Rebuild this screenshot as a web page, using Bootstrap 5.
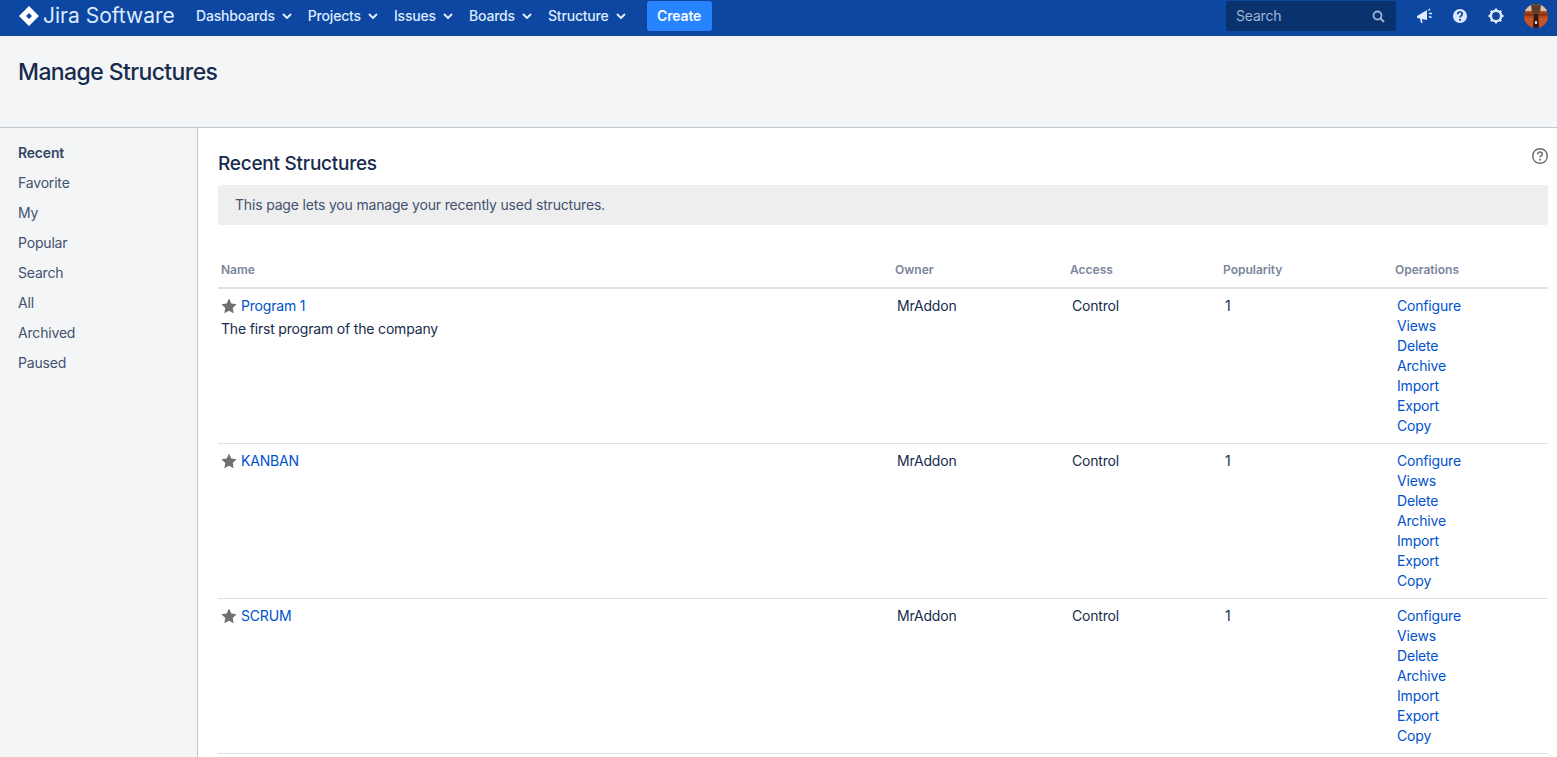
<!DOCTYPE html>
<html lang="en">
<head>
  <meta charset="UTF-8" />
  <title>Manage Structures</title>
  <link href="https://cdn.jsdelivr.net/npm/bootstrap@5.3.3/dist/css/bootstrap.min.css" rel="stylesheet" />
  <style>
    html, body { height: 757px; overflow: hidden; }
    body { font-family: Inter, "Liberation Sans", sans-serif; font-size: 14px; line-height: 20px; letter-spacing: -.18px; color: #172b4d; background: #fff; }
    a { color: #0052cc; text-decoration: none; }
    .topbar { height: 36px; background: #0d47a1; padding: 0 9px 4px 19px; color: #deebff; }
    .logo-name { font-size: 21px; font-weight: 400; color: #deebff; width: 133px; margin-left: 4px; letter-spacing: 0; white-space: nowrap; }
    .topmenu { margin-left: 20px; gap: 16px; }
    .topmenu a { color: #deebff; font-weight: 500; display: flex; align-items: center; gap: 7px; }
    .create-btn { background: #2684ff; color: #f4f8ff; font-weight: 600; border: 0; border-radius: 3px; height: 30px; width: 65px; padding: 0; margin-left: 21px; font-size: 14px; letter-spacing: -.18px; }
    .top-search { width: 170px; height: 30px; background: #09326f; border-radius: 3px; color: #9fb4d6; padding: 0 11px 0 10px; margin-right: 19px; }
    .top-icons { gap: 18px; }
    .avatar { width: 24px; height: 24px; margin-left: 1px; display: block; }
    .page-head { height: 92px; background: #f4f5f7; border-bottom: 1px solid #c1c7d0; padding: 20px 18px 0; }
    .page-head h1 { font-size: 23px; line-height: 32px; font-weight: 500; color: #172b4d; margin: 0; letter-spacing: -.6px; }
    .main-wrap { height: 629px; }
    .side-col { width: 198px; flex: none; background: #f4f5f7; border-right: 1px solid #c1c7d0; padding-top: 10px; }
    .side-col a { display: block; height: 30px; line-height: 30px; padding-left: 18px; color: #42526e; }
    .side-col a.on { font-weight: 600; color: #344563; }
    .content-col { padding: 0 9px 0 20px; min-width: 0; }
    .content-col h2 { font-size: 19px; line-height: 28px; font-weight: 500; margin: 22px 0 7px; letter-spacing: -.25px; }
    .note-box { background: #eeeeee; border-radius: 3px; height: 40px; line-height: 40px; padding-left: 17px; color: #42526e; margin-bottom: 30px; }
    .help-link { position: absolute; top: 19px; right: 8px; line-height: 0; }
    .struct-table { table-layout: fixed; width: 100%; margin: 0; }
    .struct-table th { font-size: 12px; font-weight: 600; letter-spacing: 0; color: #7a869a; padding: 5px 2px 7px 2px; line-height: 20px; border-bottom: 2px solid #dfe1e6; }
    .struct-table td { padding: 7px 2px 7px 4px; border-bottom: 1px solid #dfe1e6; color: #172b4d; vertical-align: top; height: 155px; }
    .struct-table th:first-child, .struct-table td:first-child { padding-left: 3px; }
    .descr { margin-top: 3px; }
    .star-ic { margin-right: 4px; vertical-align: -3px; }
  </style>
</head>
<body>
  <nav class="topbar d-flex align-items-center">
    <svg width="20" height="20" viewBox="0 0 20 20"><defs><linearGradient id="logoFade" x1="0.3" y1="0.3" x2="1" y2="1"><stop offset="0.55" stop-color="#ffffff"/><stop offset="1" stop-color="#a9c6f0"/></linearGradient></defs><path fill-rule="evenodd" d="M10 0 20 10 10 20 0 10ZM10 7 7 10 10 13 13 10Z" fill="url(#logoFade)"/></svg>
    <span class="logo-name">Jira Software</span>
    <div class="topmenu d-flex align-items-center">
      <a href="#">Dashboards <svg width="10" height="6" viewBox="0 0 10 6"><path d="M1 1l4 4 4-4" fill="none" stroke="#deebff" stroke-width="2"/></svg></a>
      <a href="#">Projects <svg width="10" height="6" viewBox="0 0 10 6"><path d="M1 1l4 4 4-4" fill="none" stroke="#deebff" stroke-width="2"/></svg></a>
      <a href="#">Issues <svg width="10" height="6" viewBox="0 0 10 6"><path d="M1 1l4 4 4-4" fill="none" stroke="#deebff" stroke-width="2"/></svg></a>
      <a href="#">Boards <svg width="10" height="6" viewBox="0 0 10 6"><path d="M1 1l4 4 4-4" fill="none" stroke="#deebff" stroke-width="2"/></svg></a>
      <a href="#">Structure <svg width="10" height="6" viewBox="0 0 10 6"><path d="M1 1l4 4 4-4" fill="none" stroke="#deebff" stroke-width="2"/></svg></a>
    </div>
    <button class="create-btn" type="button">Create</button>
    <div class="top-search d-flex align-items-center justify-content-between ms-auto">
      <span>Search</span>
      <svg width="13" height="13" viewBox="0 0 13 13"><circle cx="5.500" cy="5.500" r="4" fill="none" stroke="#9fb4d6" stroke-width="1.800"/><path d="M8.500 8.500l3.500 3.500" stroke="#9fb4d6" stroke-width="2"/></svg>
    </div>
    <div class="top-icons d-flex align-items-center">
      <svg width="18" height="18" viewBox="0 0 18 18"><path d="M2 9 12 3V13L7 12 7.500 16H6L5 11.500 2 11Z" fill="#deebff"/><path d="M13.500 3.500l1.500-1.500M14 6.500h3M14 9.500l2.500 1" stroke="#deebff" stroke-width="1.400"/></svg>
      <svg width="18" height="18" viewBox="0 0 18 18"><circle cx="9" cy="9" r="7" fill="#deebff"/><path d="M6.700 7.200C6.700 5.800 7.800 5 9 5s2.300.8 2.300 2.100c0 1.700-2.300 1.700-2.300 3.400" fill="none" stroke="#0d47a1" stroke-width="1.700"/><circle cx="9" cy="12.800" r="1.100" fill="#0d47a1"/></svg>
      <svg width="18" height="18" viewBox="0 0 18 18"><circle cx="9" cy="9" r="5.200" fill="none" stroke="#deebff" stroke-width="2.600"/><path d="M9 1.500v2.400M9 14.100v2.400M1.500 9h2.400M14.100 9h2.400M3.700 3.700l1.700 1.700M12.600 12.600l1.700 1.700M3.700 14.300l1.700-1.700M12.600 5.400l1.700-1.700" stroke="#deebff" stroke-width="2"/></svg>
      <svg class="avatar" viewBox="0 0 24 24"><defs><clipPath id="avClip"><circle cx="12" cy="12" r="12"/></clipPath></defs><g clip-path="url(#avClip)"><rect width="24" height="24" fill="#b04c20"/><rect width="24" height="7" fill="#d8c3a8"/><path d="M7 0h10l-1 9H8Z" fill="#5a3d2e"/><rect y="9" width="24" height="3" fill="#8a3a1a"/><rect y="14" width="24" height="10" fill="#c2562a"/><path d="M10 10h4l1 14H9Z" fill="#2c1a16"/><rect x="11" y="17" width="2" height="3" fill="#e8dcd0"/></g></svg>
    </div>
  </nav>

  <header class="page-head"><h1>Manage Structures</h1></header>

  <div class="main-wrap d-flex">
    <aside class="side-col">
      <a class="on" href="#">Recent</a>
      <a href="#">Favorite</a>
      <a href="#">My</a>
      <a href="#">Popular</a>
      <a href="#">Search</a>
      <a href="#">All</a>
      <a href="#">Archived</a>
      <a href="#">Paused</a>
    </aside>
    <main class="content-col flex-grow-1 position-relative">
      <a class="help-link" href="#" aria-label="Help"><svg width="18" height="18" viewBox="0 0 18 18"><circle cx="9" cy="9" r="7.300" fill="none" stroke="#6b6b6b" stroke-width="1.400"/><path d="M6.700 7.200C6.700 5.800 7.800 5 9 5s2.300.8 2.300 2.100c0 1.700-2.300 1.700-2.300 3.400" fill="none" stroke="#6b6b6b" stroke-width="1.500"/><circle cx="9" cy="12.800" r="1" fill="#6b6b6b"/></svg></a>
      <h2>Recent Structures</h2>
      <div class="note-box">This page lets you manage your recently used structures.</div>
      <table class="struct-table">
        <colgroup><col style="width:675px"><col style="width:175px"><col style="width:153px"><col style="width:172px"><col></colgroup>
        <thead><tr><th>Name</th><th>Owner</th><th>Access</th><th>Popularity</th><th>Operations</th></tr></thead>
        <tbody id="rows"></tbody>
      </table>
    </main>
  </div>

  <script>
    const structures = [
      { name: "Program 1", descr: "The first program of the company" },
      { name: "KANBAN" },
      { name: "SCRUM" }
    ];
    const ops = ["Configure", "Views", "Delete", "Archive", "Import", "Export", "Copy"];
    const star = '<svg class="star-ic" width="16" height="16" viewBox="0 0 16 16"><path d="M8 .6l2.300 4.900 5.300.7-3.900 3.700 1 5.300L8 12.700l-4.700 2.500 1-5.300L.4 6.200l5.300-.7Z" fill="#707070"/></svg>';
    document.getElementById("rows").innerHTML = structures.map(s => `
      <tr>
        <td>${star}<a href="#">${s.name}</a>${s.descr ? `<div class="descr">${s.descr}</div>` : ""}</td>
        <td>MrAddon</td><td>Control</td><td>1</td>
        <td>${ops.map(o => `<div><a href="#">${o}</a></div>`).join("")}</td>
      </tr>`).join("");
  </script>
  <script src="https://cdn.jsdelivr.net/npm/bootstrap@5.3.3/dist/js/bootstrap.bundle.min.js"></script>
</body>
</html>
